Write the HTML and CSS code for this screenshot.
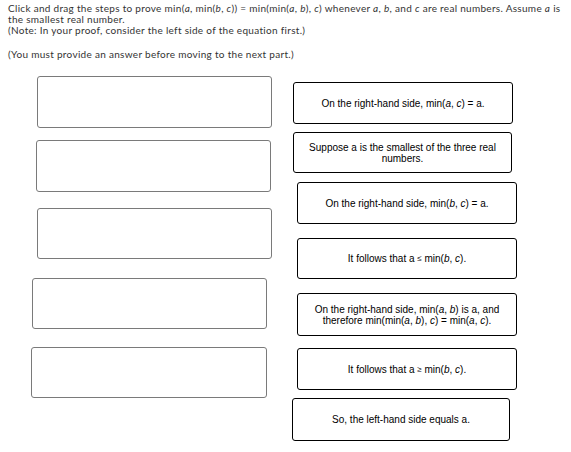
FILE: index.html
```html
<!DOCTYPE html>
<html>
<head>
<meta charset="utf-8">
<link rel="stylesheet" href="styles.css">
</head>
<body>
<div class="prompt">
  <p class="line">Click and drag the steps to prove min(<i>a</i>, min(<i>b</i>, <i>c</i>)) = min(min(<i>a</i>, <i>b</i>), <i>c</i>) whenever <i>a</i>, <i>b</i>, and <i>c</i> are real numbers. Assume <i>a</i> is the smallest real number.</p>
  <p class="line">(Note: In your proof, consider the left side of the equation first.)</p>
  <p class="line gap">(You must provide an answer before moving to the next part.)</p>
</div>
<div class="board">
  <div class="targets">
    <div class="slot s1"></div>
    <div class="slot s2"></div>
    <div class="slot s3"></div>
    <div class="slot s4"></div>
    <div class="slot s5"></div>
  </div>
  <div class="steps">
    <div class="step t1"><span class="txt">On the right-hand side, min(<i>a</i>, <i>c</i>) = a.</span></div>
    <div class="step t2"><span class="txt">Suppose a is the smallest of the three real numbers.</span></div>
    <div class="step t3"><span class="txt">On the right-hand side, min(<i>b</i>, <i>c</i>) = a.</span></div>
    <div class="step t4"><span class="txt">It follows that a <span class="rel">≤</span> min(<i>b</i>, <i>c</i>).</span></div>
    <div class="step t5"><span class="txt">On the right-hand side, min(<i>a</i>, <i>b</i>) is a, and therefore min(min(<i>a</i>, <i>b</i>), <i>c</i>) = min(<i>a</i>, <i>c</i>).</span></div>
    <div class="step t6"><span class="txt">It follows that a <span class="rel">≥</span> min(<i>b</i>, <i>c</i>).</span></div>
    <div class="step t7"><span class="txt">So, the left-hand side equals a.</span></div>
  </div>
</div>
</body>
</html>
```
FILE: styles.css
```css
* { box-sizing: border-box; }
html, body { margin: 0; padding: 0; background: #fff; }
body { width: 571px; height: 452px; overflow: hidden; }

.prompt {
  padding: 3px 8px 0 8px;
  font-family: Lato, "Open Sans", sans-serif;
  font-size: 10px;
  line-height: 11px;
  letter-spacing: 0.3px;
  color: #333;
}
.line { margin: 0; }
.line.gap { margin-top: 13px; }

.board {
  display: grid;
  grid-template-columns: 280px 1fr;
}
.targets, .steps {
  display: flex;
  flex-direction: column;
  align-items: flex-start;
}

.slot {
  width: 235px;
  height: 52px;
  border: 1px solid #7a7a7a;
  border-radius: 3px;
  background: #fff;
}
.s1 { margin: 16px 0 0 37px; }
.s2 { margin: 12px 0 0 36px; }
.s3 { margin: 16px 0 0 37px; height: 51px; }
.s4 { margin: 19px 0 0 32px; height: 51px; }
.s5 { margin: 18px 0 0 31px; width: 236px; height: 51px; }

.step {
  width: 220px;
  height: 42px;
  border: 1px solid #000;
  border-radius: 3px;
  background: #fff;
  display: flex;
  align-items: center;
  justify-content: center;
  padding: 0 14px;
  font-family: "Liberation Sans", Arial, sans-serif;
  font-size: 10px;
  line-height: 11px;
  color: #000;
}
.txt { display: block; text-align: center; }
.rel { font-size: 8px; vertical-align: 1px; }
.t1 { margin: 22px 0 0 13px; }
.t2 { margin: 8px 0 0 13px; width: 219px; height: 41px; }
.t3 { margin: 9px 0 0 17px; }
.t4 { margin: 14px 0 0 17px; height: 41px; }
.t5 { margin: 14px 0 0 17px; height: 43px; }
.t6 { margin: 12px 0 0 17px; }
.t7 { margin: 8px 0 0 12px; width: 218px; height: 43px; }
```
